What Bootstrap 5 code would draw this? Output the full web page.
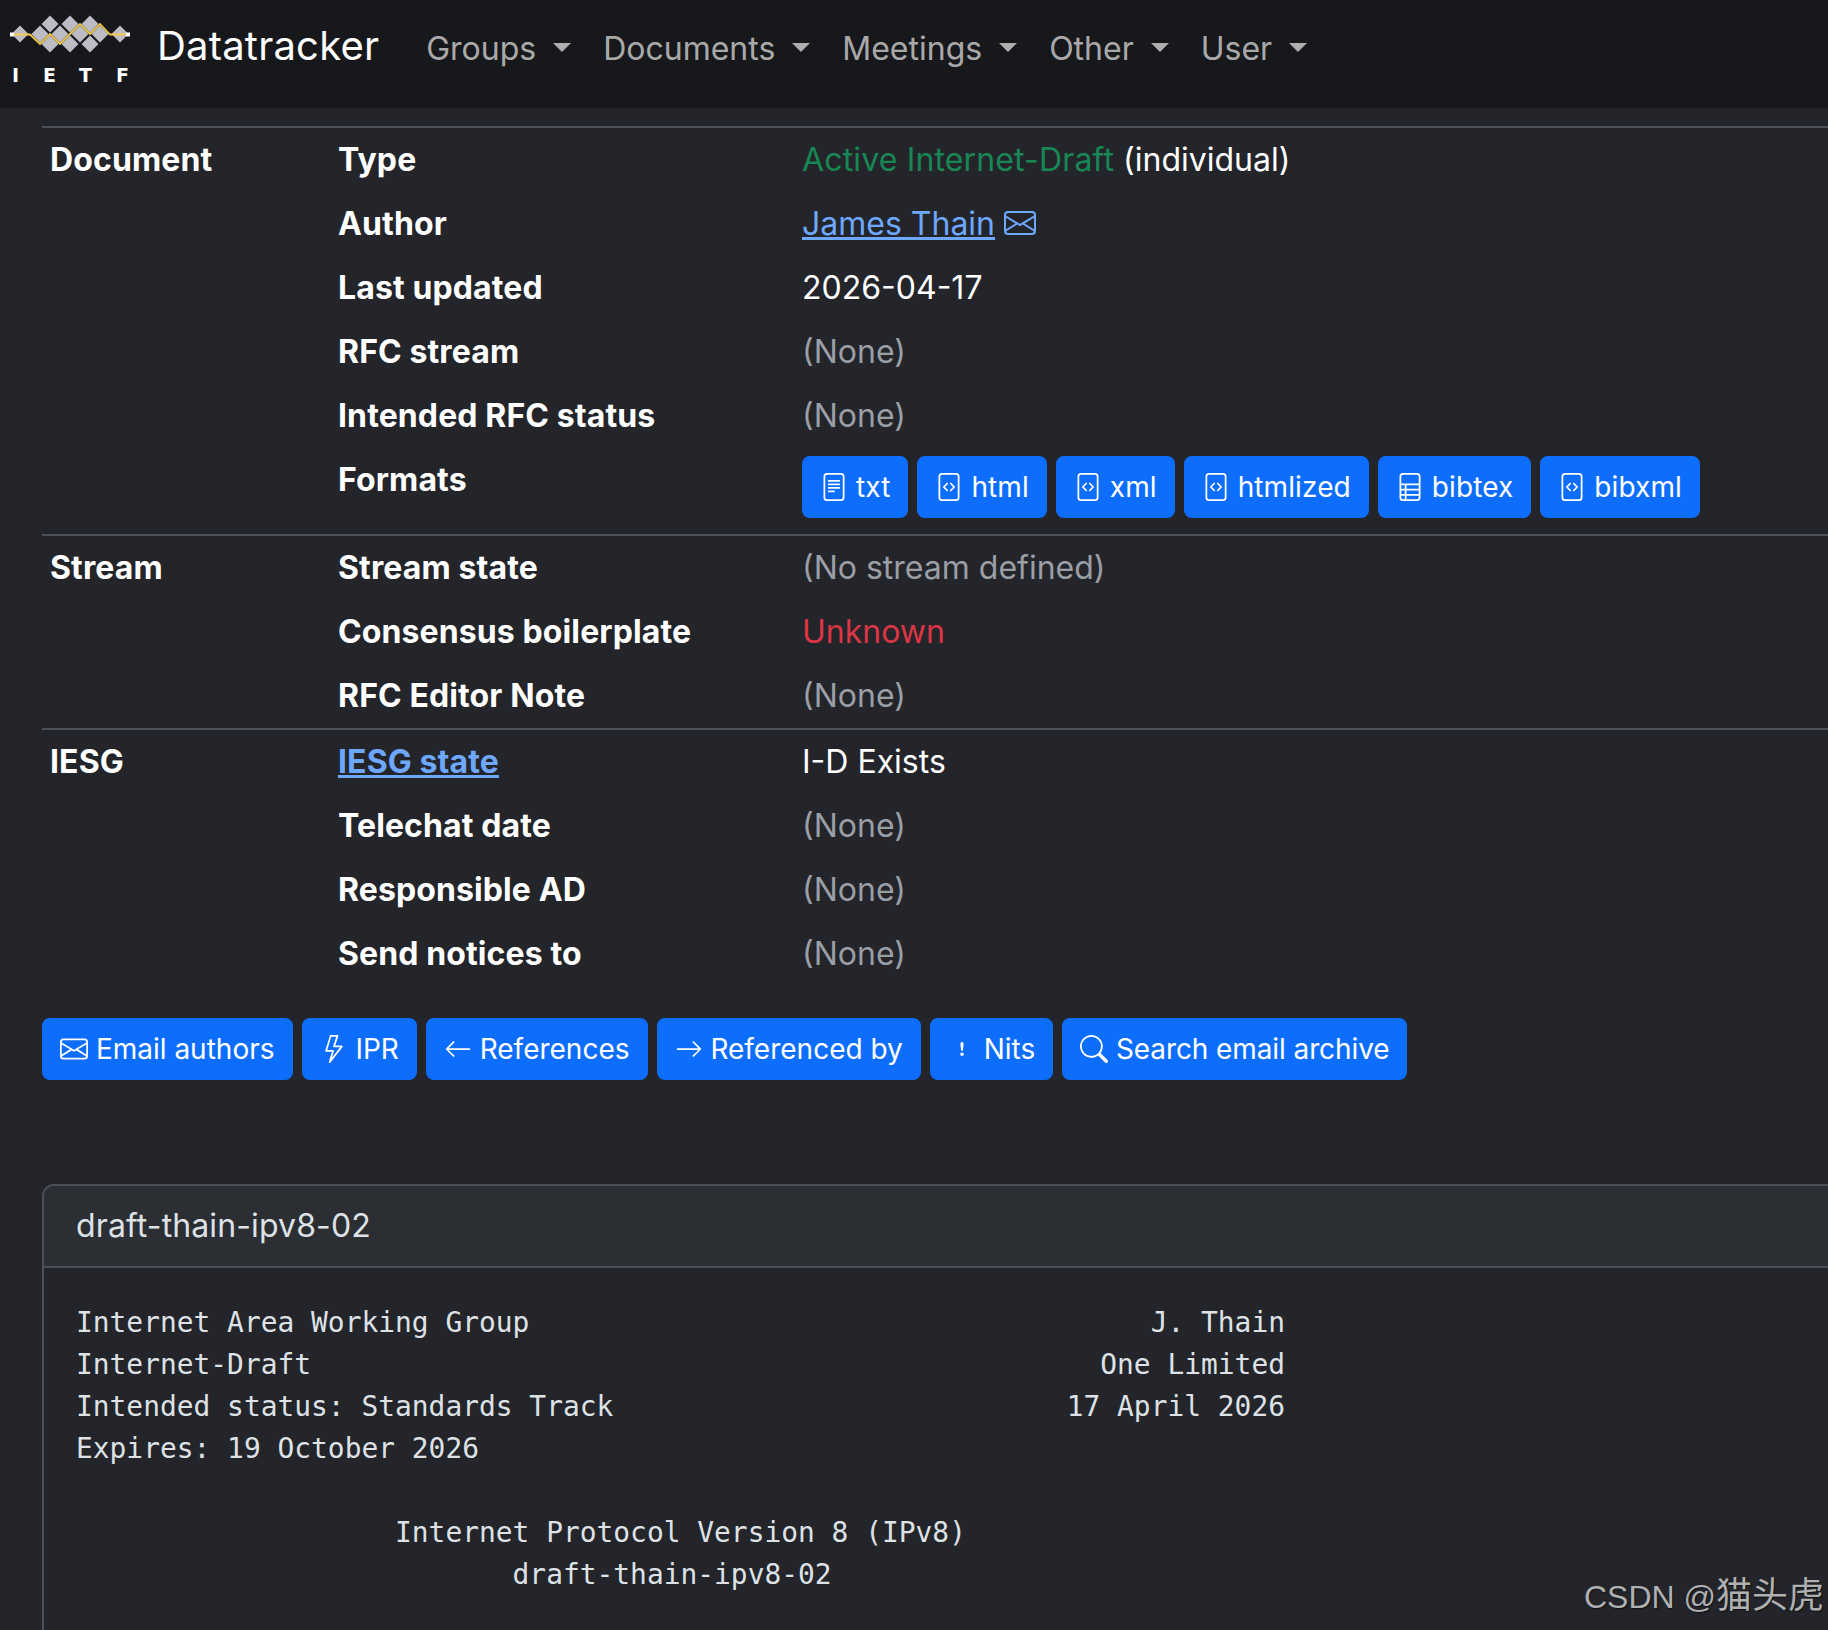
<!DOCTYPE html>
<html lang="en" data-bs-theme="dark">
<head>
<meta charset="utf-8">
<title>draft-thain-ipv8-02</title>
<link href="https://cdn.jsdelivr.net/npm/bootstrap@5.3.0/dist/css/bootstrap.min.css" rel="stylesheet">
<style>
html { font-size: 32px; overflow: hidden; height: 1630px; }
body { font-family: Inter, "Liberation Sans", sans-serif; background: #23252a; color: #fff; overflow: hidden; height: 1630px; position: relative; }
.top-bar { background: #17181b; padding: 0; height: 108px; align-items: flex-start; }
.top-bar .container-fluid { padding: 0; justify-content: flex-start; align-items: flex-start; }
.top-bar .navbar-brand { color: #fff; display: flex; align-items: center; gap: 8px; padding: 0; margin-right: 31px; letter-spacing: .2px; }
.brand-word { padding-top: 3px; }
.top-bar .navbar-nav { margin-top: 9px; }
.top-bar .nav-link { color: rgba(255,255,255,.65); }
.top-bar .dropdown-toggle::after { margin-left: 17px; }
.ietf-logo { display: block; width: 149px; height: 88px; }
.ietf-logo text { font-family: "DejaVu Sans", sans-serif; font-weight: 700; font-size: 19px; fill: #fff; text-anchor: middle; letter-spacing: 0; }
.page-wrap { width: 2400px; padding: 18px 0 0 42px; }
.info-table { margin-bottom: 0; --bs-table-color: #fff; --bs-table-bg: transparent; table-layout: fixed; }
.info-table > tbody { border-top: 2px solid #495057; }
.info-table > tbody:not(:first-child) { border-top-width: 2px; }
.info-table th { letter-spacing: .11px; }
.info-table th:first-child { width: 288px; }
.info-table th:nth-child(2) { width: 464px; }
.info-table a:not(.btn) { color: #6ea8fe; }
.info-table td.fmt-cell { padding-bottom: 16px; }
.fmt-cell .btn { letter-spacing: .1px; }
.val-none { color: #9a9ea5; }
.val-active { color: #198754; letter-spacing: .15px; }
.val-bad { color: #dc3545; }
.bi-ico { width: 1em; height: 1em; fill: currentColor; vertical-align: -.125em; display: inline-block; }
.btn-sm { --bs-btn-border-width: 2px; }
.action-row { margin-top: 32px; }
.action-row .search-btn { letter-spacing: -.1px; }
.doc-card { margin-top: 104px; --bs-card-border-width: 2px; --bs-card-border-color: #495057; --bs-card-cap-bg: #2b2e33; background: #23252a; }
.doc-card .card-header { color: #dee2e6; letter-spacing: .12px; }
.doc-card .card-body { min-height: 700px; }
.doc-text { font-family: "DejaVu Sans Mono", monospace; font-size: 27.9px; line-height: 42px; color: #dee2e6; margin: 2px 0 0; overflow: visible; }
.mark-stamp { position: absolute; right: 4px; top: 1577px; font-family: "Liberation Sans", "Noto Sans CJK SC", sans-serif; font-size: 32px; line-height: 38px; color: #aeb0b2; text-shadow: 1px 1px 1px #111; white-space: nowrap; }
.mark-stamp span { font-size: 36px; }
</style>
</head>
<body>
<svg width="0" height="0" class="d-none">
<symbol id="i-env" viewBox="0 0 16 16"><path d="M0 4a2 2 0 0 1 2-2h12a2 2 0 0 1 2 2v8a2 2 0 0 1-2 2H2a2 2 0 0 1-2-2V4Zm2-1a1 1 0 0 0-1 1v.217l7 4.2 7-4.2V4a1 1 0 0 0-1-1H2Zm13 2.383-4.708 2.825L15 11.105V5.383Zm-.034 6.876-5.64-3.471L8 9.583l-1.326-.795-5.64 3.47A1 1 0 0 0 2 13h12a1 1 0 0 0 .966-.741ZM1 11.105l4.708-2.897L1 5.383v5.722Z"/></symbol>
<symbol id="i-text" viewBox="0 0 16 16"><path d="M5 4a.5.5 0 0 0 0 1h6a.5.5 0 0 0 0-1H5zm-.5 2.5A.5.5 0 0 1 5 6h6a.5.5 0 0 1 0 1H5a.5.5 0 0 1-.5-.5zM5 8a.5.5 0 0 0 0 1h6a.5.5 0 0 0 0-1H5zm0 2a.5.5 0 0 0 0 1h3a.5.5 0 0 0 0-1H5z"/><path d="M2 2a2 2 0 0 1 2-2h8a2 2 0 0 1 2 2v12a2 2 0 0 1-2 2H4a2 2 0 0 1-2-2V2zm10-1H4a1 1 0 0 0-1 1v12a1 1 0 0 0 1 1h8a1 1 0 0 0 1-1V2a1 1 0 0 0-1-1z"/></symbol>
<symbol id="i-code" viewBox="0 0 16 16"><path d="M6.646 5.646a.5.5 0 1 1 .708.708L5.707 8l1.647 1.646a.5.5 0 0 1-.708.708l-2-2a.5.5 0 0 1 0-.708l2-2zm2.708 0a.5.5 0 1 0-.708.708L10.293 8 8.646 9.646a.5.5 0 0 0 .708.708l2-2a.5.5 0 0 0 0-.708l-2-2z"/><path d="M2 2a2 2 0 0 1 2-2h8a2 2 0 0 1 2 2v12a2 2 0 0 1-2 2H4a2 2 0 0 1-2-2V2zm10-1H4a1 1 0 0 0-1 1v12a1 1 0 0 0 1 1h8a1 1 0 0 0 1-1V2a1 1 0 0 0-1-1z"/></symbol>
<symbol id="i-ruled" viewBox="0 0 16 16"><path d="M2 2a2 2 0 0 1 2-2h8a2 2 0 0 1 2 2v12a2 2 0 0 1-2 2H4a2 2 0 0 1-2-2V2zm2-1a1 1 0 0 0-1 1v4h10V2a1 1 0 0 0-1-1H4zm9 6H6v2h7V7zm0 3H6v2h7v-2zm0 3H6v2h6a1 1 0 0 0 1-1v-1zm-8 2v-2H3v1a1 1 0 0 0 1 1h1zm-2-3h2v-2H3v2zm0-3h2V7H3v2z"/></symbol>
<symbol id="i-bolt" viewBox="0 0 16 16"><path d="M5.52.359A.5.5 0 0 1 6 0h4a.5.5 0 0 1 .474.658L8.694 6H12.5a.5.5 0 0 1 .395.807l-7 9a.5.5 0 0 1-.873-.454L6.823 9.5H3.5a.5.5 0 0 1-.48-.641l2.5-8zM6.374 1 4.168 8.5H7.5a.5.5 0 0 1 .478.647L6.78 13.04 11.478 7H8a.5.5 0 0 1-.474-.658L9.306 1H6.374z"/></symbol>
<symbol id="i-left" viewBox="0 0 16 16"><path fill-rule="evenodd" d="M15 8a.5.5 0 0 0-.5-.5H2.707l3.147-3.146a.5.5 0 1 0-.708-.708l-4 4a.5.5 0 0 0 0 .708l4 4a.5.5 0 0 0 .708-.708L2.707 8.5H14.5A.5.5 0 0 0 15 8z"/></symbol>
<symbol id="i-right" viewBox="0 0 16 16"><path fill-rule="evenodd" d="M1 8a.5.5 0 0 1 .5-.5h11.793l-3.147-3.146a.5.5 0 0 1 .708-.708l4 4a.5.5 0 0 1 0 .708l-4 4a.5.5 0 0 1-.708-.708L13.293 8.5H1.5A.5.5 0 0 1 1 8z"/></symbol>
<symbol id="i-excl" viewBox="0 0 16 16"><path d="M7.002 11a1 1 0 1 1 2 0 1 1 0 0 1-2 0zM7.1 4.995a.905.905 0 1 1 1.8 0l-.35 3.507a.552.552 0 0 1-1.1 0L7.1 4.995z"/></symbol>
<symbol id="i-search" viewBox="0 0 16 16"><path d="M11.742 10.344a6.5 6.5 0 1 0-1.397 1.398h-.001c.03.04.062.078.098.115l3.85 3.85a1 1 0 0 0 1.415-1.414l-3.85-3.85a1.007 1.007 0 0 0-.115-.1zM12 6.5a5.5 5.5 0 1 1-11 0 5.5 5.5 0 0 1 11 0z"/></symbol>
</svg>

<nav class="navbar navbar-expand top-bar">
  <div class="container-fluid">
    <a class="navbar-brand" href="#">
      <svg class="ietf-logo" viewBox="0 0 149 88" aria-label="IETF">
        <g fill="#bcbcc4">
          <path d="M20 25.500l8.500 8.500-8.500 8.500-8.500-8.500z"/><path d="M40 25.500l8.500 8.500-8.500 8.500-8.500-8.500z"/><path d="M60 25.500l8.500 8.500-8.500 8.500-8.500-8.500z"/><path d="M80 25.500l8.500 8.500-8.500 8.500-8.500-8.500z"/><path d="M100 25.500l8.500 8.500-8.500 8.500-8.500-8.500z"/><path d="M120 25.500l8.500 8.500-8.500 8.500-8.500-8.500z"/>
          <path d="M50 15.500l8.500 8.500-8.500 8.500-8.500-8.500z"/><path d="M70 15.500l8.500 8.500-8.500 8.500-8.500-8.500z"/><path d="M90 15.500l8.500 8.500-8.500 8.500-8.500-8.500z"/>
          <path d="M50 35.500l8.500 8.500-8.500 8.500-8.500-8.500z"/><path d="M70 35.500l8.500 8.500-8.500 8.500-8.500-8.500z"/><path d="M90 35.500l8.500 8.500-8.500 8.500-8.500-8.500z"/>
        </g>
        <rect x="10" y="32.500" width="4" height="4" fill="#fff"/><rect x="126" y="32.500" width="4" height="4" fill="#fff"/>
        <path d="M14 34.500H30L40 44 50 34l10 10 20-20 10 10 10-10 10 10.500h16" fill="none" stroke="#f5c84c" stroke-width="1.800"/>
        <text x="15.500" y="82">I</text><text x="49.500" y="82">E</text><text x="85.500" y="82">T</text><text x="122.500" y="82">F</text>
      </svg>
      <span class="brand-word">Datatracker</span>
    </a>
    <ul class="navbar-nav">
      <li class="nav-item dropdown"><a class="nav-link dropdown-toggle" href="#">Groups</a></li>
      <li class="nav-item dropdown"><a class="nav-link dropdown-toggle" href="#">Documents</a></li>
      <li class="nav-item dropdown"><a class="nav-link dropdown-toggle" href="#">Meetings</a></li>
      <li class="nav-item dropdown"><a class="nav-link dropdown-toggle" href="#">Other</a></li>
      <li class="nav-item dropdown"><a class="nav-link dropdown-toggle" href="#">User</a></li>
    </ul>
  </div>
</nav>

<main class="page-wrap">
  <table class="table table-sm table-borderless info-table">
    <tbody>
      <tr><th>Document</th><th>Type</th><td><span class="val-active">Active Internet-Draft</span> (individual)</td></tr>
      <tr><th></th><th>Author</th><td><a href="#">James Thain</a> <a href="#"><svg class="bi-ico"><use href="#i-env"/></svg></a></td></tr>
      <tr><th></th><th>Last updated</th><td>2026-04-17</td></tr>
      <tr><th></th><th>RFC stream</th><td class="val-none">(None)</td></tr>
      <tr><th></th><th>Intended RFC status</th><td class="val-none">(None)</td></tr>
      <tr><th></th><th>Formats</th><td class="fmt-cell">
        <a class="btn btn-primary btn-sm" href="#"><svg class="bi-ico"><use href="#i-text"/></svg> txt</a>
        <a class="btn btn-primary btn-sm" href="#"><svg class="bi-ico"><use href="#i-code"/></svg> html</a>
        <a class="btn btn-primary btn-sm" href="#"><svg class="bi-ico"><use href="#i-code"/></svg> xml</a>
        <a class="btn btn-primary btn-sm" href="#"><svg class="bi-ico"><use href="#i-code"/></svg> htmlized</a>
        <a class="btn btn-primary btn-sm" href="#"><svg class="bi-ico"><use href="#i-ruled"/></svg> bibtex</a>
        <a class="btn btn-primary btn-sm" href="#"><svg class="bi-ico"><use href="#i-code"/></svg> bibxml</a>
      </td></tr>
    </tbody>
    <tbody>
      <tr><th>Stream</th><th>Stream state</th><td class="val-none">(No stream defined)</td></tr>
      <tr><th></th><th>Consensus boilerplate</th><td class="val-bad">Unknown</td></tr>
      <tr><th></th><th>RFC Editor Note</th><td class="val-none">(None)</td></tr>
    </tbody>
    <tbody>
      <tr><th>IESG</th><th><a href="#">IESG state</a></th><td>I-D Exists</td></tr>
      <tr><th></th><th>Telechat date</th><td class="val-none">(None)</td></tr>
      <tr><th></th><th>Responsible AD</th><td class="val-none">(None)</td></tr>
      <tr><th></th><th>Send notices to</th><td class="val-none">(None)</td></tr>
    </tbody>
  </table>

  <div class="action-row">
    <a class="btn btn-primary btn-sm" href="#"><svg class="bi-ico"><use href="#i-env"/></svg> Email authors</a>
    <a class="btn btn-primary btn-sm" href="#"><svg class="bi-ico"><use href="#i-bolt"/></svg> IPR</a>
    <a class="btn btn-primary btn-sm" href="#"><svg class="bi-ico"><use href="#i-left"/></svg> References</a>
    <a class="btn btn-primary btn-sm" href="#"><svg class="bi-ico"><use href="#i-right"/></svg> Referenced by</a>
    <a class="btn btn-primary btn-sm" href="#"><svg class="bi-ico"><use href="#i-excl"/></svg> Nits</a>
    <a class="btn btn-primary btn-sm search-btn" href="#"><svg class="bi-ico"><use href="#i-search"/></svg> Search email archive</a>
  </div>

  <div class="card doc-card">
    <div class="card-header">draft-thain-ipv8-02</div>
    <div class="card-body"><pre class="doc-text">Internet Area Working Group                                     J. Thain
Internet-Draft                                               One Limited
Intended status: Standards Track                           17 April 2026
Expires: 19 October 2026

                   Internet Protocol Version 8 (IPv8)
                          draft-thain-ipv8-02</pre></div>
  </div>
</main>

<div class="mark-stamp">CSDN @<span>猫头虎</span></div>

<script src="https://cdn.jsdelivr.net/npm/bootstrap@5.3.0/dist/js/bootstrap.bundle.min.js"></script>
</body>
</html>
